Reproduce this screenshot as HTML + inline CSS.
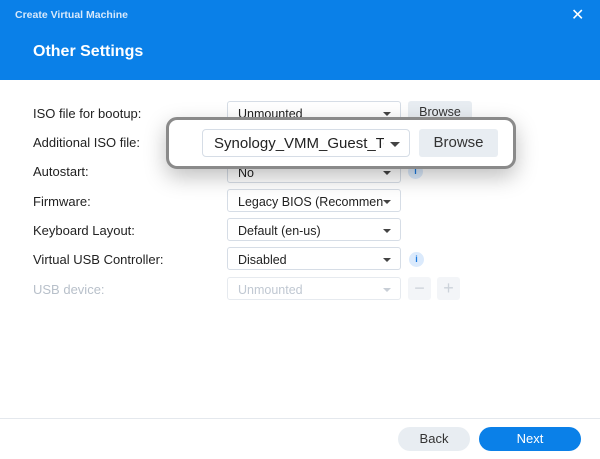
<html><head><style>
body{margin:0;width:600px;height:459px;background:#fff;font-family:"Liberation Sans",sans-serif;position:relative;overflow:hidden}
.hd{position:absolute;left:0;top:0;width:600px;height:80px;background:#0a80e8}
.t1{position:absolute;left:15px;top:9px;color:#d6e8fb;font-size:10.5px;font-weight:bold}
.x{position:absolute;left:571px;top:5px;color:#fff;font-size:16px}
.t2{position:absolute;left:33px;top:43px;color:#fff;font-size:16px;font-weight:bold}
.lb{position:absolute;left:33px;font-size:13px;color:#222}
.sel{position:absolute;left:227px;width:174px;height:23px;border:1px solid #d6dde6;border-radius:3px;box-sizing:border-box;font-size:12.5px;color:#222;padding:5px 24px 0 10px;white-space:nowrap;overflow:hidden}
.sel:after{content:"";position:absolute;right:9px;top:10px;border-left:4px solid transparent;border-right:4px solid transparent;border-top:4px solid #444}
.dis{color:#c0c8d2}.dis:after{border-top-color:#c8ced6}
.btn{position:absolute;background:#e8edf2;border-radius:3px;font-size:12.5px;color:#333;text-align:center}
.info{position:absolute;width:15px;height:15px;border-radius:50%;background:#dbeafc;color:#1a7ae0;font-size:9px;font-weight:bold;text-align:center;line-height:15px}
</style></head><body>
<div class="hd"><div class="t1">Create Virtual Machine</div><div class="x">✕</div><div class="t2">Other Settings</div></div>
<div class="lb" style="top:106px">ISO file for bootup:</div>
<div class="lb" style="top:135px">Additional ISO file:</div>
<div class="lb" style="top:164px">Autostart:</div>
<div class="lb" style="top:194px">Firmware:</div>
<div class="lb" style="top:223px">Keyboard Layout:</div>
<div class="lb" style="top:252px">Virtual USB Controller:</div>
<div class="lb" style="top:282px;color:#b8c0ca">USB device:</div>
<div class="sel" style="top:101px">Unmounted</div>
<div class="btn" style="left:408px;top:101px;width:64px;height:23px;line-height:23px">Browse</div>
<div class="sel" style="top:160px">No</div>
<div class="info" style="left:408px;top:164px">i</div>
<div class="sel" style="top:189px">Legacy BIOS (Recommen</div>
<div class="sel" style="top:218px">Default (en-us)</div>
<div class="sel" style="top:247px">Disabled</div>
<div class="info" style="left:409px;top:252px">i</div>
<div class="sel dis" style="top:277px;border-color:#e6eaef">Unmounted</div>
<div class="btn" style="left:408px;top:277px;width:23px;height:23px;line-height:22px;background:#f3f5f8;color:#ccd2da;font-size:18px">−</div>
<div class="btn" style="left:437px;top:277px;width:23px;height:23px;line-height:22px;background:#f3f5f8;color:#ccd2da;font-size:18px">+</div>
<div style="position:absolute;left:166px;top:117px;width:350px;height:52px;box-sizing:border-box;border:3px solid #8a8a8a;border-radius:11px;background:#fff;box-shadow:0 8px 22px rgba(0,0,0,.25)">
 <div style="position:absolute;left:33px;top:9px;width:208px;height:28px;border:1px solid #d6dde6;border-radius:4px;box-sizing:border-box;font-size:15px;color:#222;padding:5px 0 0 11px;white-space:nowrap"><div style="width:170px;overflow:hidden">Synology_VMM_Guest_Tc</div><span style="position:absolute;right:9px;top:12px;border-left:5px solid transparent;border-right:5px solid transparent;border-top:5px solid #444"></span></div>
 <div class="btn" style="left:250px;top:9px;width:79px;height:28px;line-height:28px;font-size:15px">Browse</div>
</div>
<div style="position:absolute;left:0;top:418px;width:600px;height:1px;background:#e4e8ed"></div>
<div class="btn" style="left:398px;top:427px;width:72px;height:24px;line-height:24px;border-radius:12px;font-size:13px">Back</div>
<div class="btn" style="left:479px;top:427px;width:102px;height:24px;line-height:24px;border-radius:12px;background:#0a80e8;color:#fff;font-size:13px">Next</div>
</body></html>
